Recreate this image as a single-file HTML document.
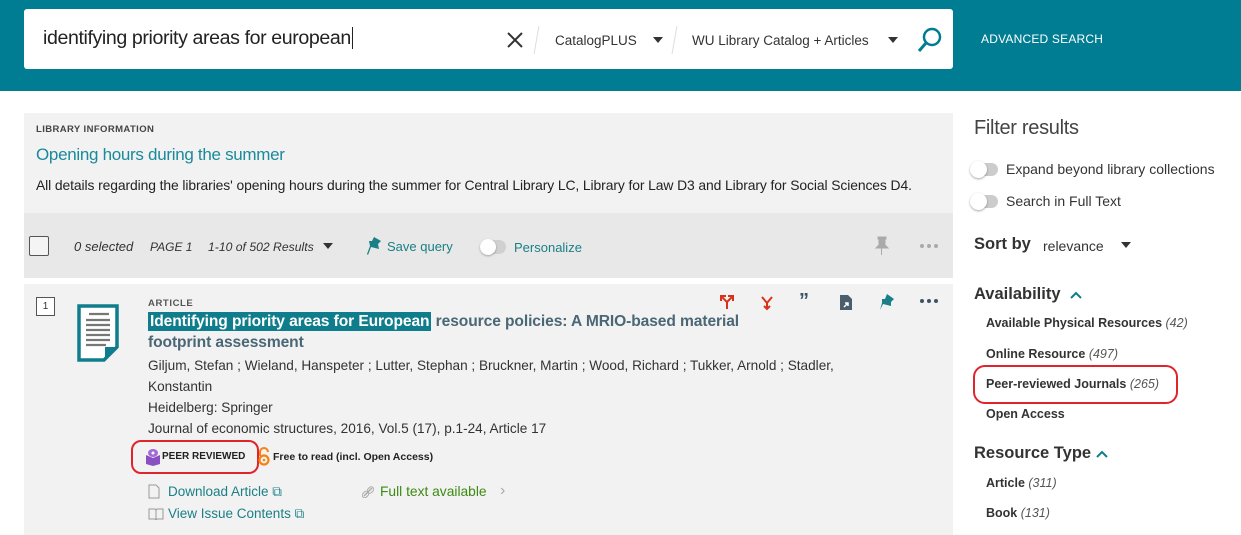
<!DOCTYPE html>
<html><head><style>
*{margin:0;padding:0;box-sizing:border-box}
body{width:1241px;height:535px;overflow:hidden;background:#fff;font-family:"Liberation Sans",sans-serif;color:#333;position:relative}
.a{position:absolute;white-space:nowrap}
.hdr{position:absolute;left:0;top:0;width:1241px;height:91px;background:#007d92}
.sb{position:absolute;left:24px;top:9px;width:929px;height:60px;background:#fff;border-radius:3px}
.f{font-size:12.5px;font-weight:bold;color:#333}
.f i{font-weight:normal;color:#555}
.dots{display:flex;gap:3px}
.dots b{width:4px;height:4px;border-radius:2px;display:block}
</style></head><body>
<div class="hdr"></div>
<div class="sb"></div>
<div class="a" style="left:43px;top:27px;font-size:19.6px;color:#222;letter-spacing:-0.4px">identifying priority areas for european<span style="border-left:1.5px solid #222;margin-left:1px"></span></div>
<svg class="a" style="left:506px;top:31px" width="18" height="18"><path d="M2 2L16 16M16 2L2 16" stroke="#333" stroke-width="2"/></svg>
<div class="a" style="left:536px;top:26px;width:1px;height:28px;background:#ddd;transform:skewX(-10deg)"></div>
<div class="a" style="left:555px;top:33px;font-size:13.5px;color:#333">CatalogPLUS</div>
<div class="a" style="left:653px;top:37px;border:5px solid transparent;border-top:6px solid #333"></div>
<div class="a" style="left:674px;top:26px;width:1px;height:28px;background:#ddd;transform:skewX(-10deg)"></div>
<div class="a" style="left:692px;top:33px;font-size:13.5px;color:#333">WU Library Catalog + Articles</div>
<div class="a" style="left:888px;top:37px;border:5px solid transparent;border-top:6px solid #333"></div>
<svg class="a" style="left:916px;top:26px" width="28" height="28"><circle cx="16" cy="11" r="8" fill="none" stroke="#007d92" stroke-width="2.5"/><path d="M10 17L3 25" stroke="#007d92" stroke-width="3"/></svg>
<div class="a" style="left:981px;top:32px;font-size:12px;color:#fff;letter-spacing:0.2px">ADVANCED SEARCH</div>

<div class="a" style="left:24px;top:113px;width:929px;height:100px;background:#f2f2f2"></div>
<div class="a" style="left:36px;top:124px;font-size:9.5px;font-weight:bold;color:#444;letter-spacing:0.4px">LIBRARY INFORMATION</div>
<div class="a" style="left:36px;top:145px;font-size:17px;color:#1a8a9a;letter-spacing:-0.3px">Opening hours during the summer</div>
<div class="a" style="left:36px;top:177px;font-size:13.9px;color:#222;letter-spacing:-0.1px">All details regarding the libraries' opening hours during the summer for Central Library LC, Library for Law D3 and Library for Social Sciences D4.</div>

<div class="a" style="left:24px;top:213px;width:929px;height:65px;background:#e8e8e8"></div>
<div class="a" style="left:29px;top:236px;width:20px;height:20px;border:1.5px solid #555;border-radius:2px;background:#f4f4f4"></div>
<div class="a" style="left:74px;top:239px;font-size:13px;font-style:italic;color:#333">0 selected</div>
<div class="a" style="left:150px;top:240px;font-size:12px;font-style:italic;color:#333">PAGE 1</div>
<div class="a" style="left:208px;top:240px;font-size:12.2px;font-style:italic;color:#333">1-10 of 502 Results</div>
<div class="a" style="left:323px;top:243px;border:5px solid transparent;border-top:6px solid #333"></div>
<svg class="a" style="left:366px;top:235px" width="18" height="22"><path d="M8 2L15 6L12 9L13 14L5 12L2 20L1 19L4 11L3 6L6 6Z" fill="#1a7f86"/></svg>
<div class="a" style="left:387px;top:239px;font-size:13px;color:#1a7f86">Save query</div>
<div class="a" style="left:480px;top:240px;width:26px;height:14px;border-radius:7px;background:#d0d0d0"></div>
<div class="a" style="left:480px;top:239px;width:16px;height:16px;border-radius:8px;background:#fff;box-shadow:0 1px 2px rgba(0,0,0,.3)"></div>
<div class="a" style="left:514px;top:240px;font-size:13px;color:#1a7f86">Personalize</div>
<svg class="a" style="left:874px;top:236px" width="16" height="20"><path d="M4 1H12V3H11V9L14 12H2L5 9V3H4Z M7.5 12V19" fill="#aaa" stroke="#aaa" stroke-width="1"/></svg>
<div class="a dots" style="left:920px;top:244px"><b style="background:#aaa"></b><b style="background:#aaa"></b><b style="background:#aaa"></b></div>

<div class="a" style="left:24px;top:284px;width:929px;height:251px;background:#f2f2f2"></div>
<div class="a" style="left:36px;top:297px;width:19px;height:19px;border:1px solid #555;font-size:10px;text-align:center;line-height:17px;background:#fff">1</div>
<svg class="a" style="left:77px;top:304px" width="44" height="58"><path d="M2 2H40V43L27 56H2Z" fill="#fff" stroke="#0f7d8c" stroke-width="3.5"/><path d="M28 55V43H40" fill="#0f7d8c"/><g stroke="#777" stroke-width="2.2"><path d="M12 10H32M9 16H33M9 21H33M9 26H33M9 31H33M9 36H33M9 41H29"/></g></svg>
<div class="a" style="left:148px;top:298px;font-size:9.5px;font-weight:bold;color:#555;letter-spacing:0.6px">ARTICLE</div>
<div class="a" style="left:148px;top:311px;font-size:15.6px;font-weight:bold;color:#4a6775;line-height:21px;letter-spacing:-0.1px"><span style="background:#0f7d8c;color:#fff;padding:1px 2px">Identifying priority areas for European</span> resource policies: A MRIO-based material<br>footprint assessment</div>
<div class="a" style="left:148px;top:355px;font-size:13.6px;color:#333;line-height:21px">Giljum, Stefan ; Wieland, Hanspeter ; Lutter, Stephan ; Bruckner, Martin ; Wood, Richard ; Tukker, Arnold ; Stadler,<br>Konstantin<br>Heidelberg: Springer<br>Journal of economic structures, 2016, Vol.5 (17), p.1-24, Article 17</div>
<svg class="a" style="left:145px;top:447px" width="16" height="19"><path d="M1 8L8 11L15 8V17L8 19L1 17Z" fill="#8b4fc4"/><ellipse cx="8" cy="6" rx="5" ry="4" fill="#a36ad8"/><circle cx="8" cy="6" r="1.5" fill="#fff"/></svg>
<div class="a" style="left:162px;top:451px;font-size:10px;font-weight:bold;color:#222">PEER REVIEWED</div>
<div class="a" style="left:131px;top:440px;width:128px;height:34px;border:2px solid #e0242c;border-radius:10px"></div>
<svg class="a" style="left:258px;top:447px" width="12" height="20"><path d="M2 9V5A4 4 0 0 1 10 5" fill="none" stroke="#f68212" stroke-width="2"/><circle cx="6" cy="13" r="4.5" fill="none" stroke="#f68212" stroke-width="2.2"/><circle cx="6" cy="13" r="1.3" fill="#f68212"/></svg>
<div class="a" style="left:273px;top:451px;font-size:10.5px;font-weight:bold;color:#222">Free to read (incl. Open Access)</div>
<svg class="a" style="left:148px;top:484px" width="12" height="15"><path d="M1 1H8L11 4V14H1Z" fill="none" stroke="#999"/></svg>
<div class="a" style="left:168px;top:484px;font-size:13.5px;color:#1a7f86">Download Article ⧉</div>
<svg class="a" style="left:148px;top:507px" width="16" height="13"><path d="M1 2H7L8 3L9 2H15V12H9L8 13L7 12H1Z M8 3V12" fill="none" stroke="#999"/></svg>
<div class="a" style="left:168px;top:506px;font-size:13.5px;color:#1a7f86">View Issue Contents ⧉</div>
<svg class="a" style="left:362px;top:486px" width="12" height="12"><path d="M2 10L10 2" stroke="#aaa" stroke-width="1.5"/><rect x="6" y="0.5" width="5" height="7" rx="2.5" transform="rotate(45 8.5 4)" fill="none" stroke="#aaa"/><rect x="1" y="5" width="5" height="7" rx="2.5" transform="rotate(45 3.5 8.5)" fill="none" stroke="#aaa"/></svg>
<div class="a" style="left:380px;top:484px;font-size:13.8px;color:#3d8a12">Full text available</div>
<div class="a" style="left:500px;top:482px;font-size:16px;color:#aaa">›</div>

<svg class="a" style="left:719px;top:294px" width="16" height="16"><path d="M8 15V8L3 3M8 8L13 3M2 7V2H7M14 7V2H9" fill="none" stroke="#d9321c" stroke-width="2"/></svg>
<svg class="a" style="left:760px;top:295px" width="14" height="16"><path d="M2 2L7 8L12 2M7 8V14M4 11L7 14L10 11" fill="none" stroke="#d9321c" stroke-width="2"/></svg>
<div class="a" style="left:799px;top:290px;font-size:20px;font-weight:bold;color:#3d5466">”</div>
<svg class="a" style="left:839px;top:294px" width="14" height="17"><path d="M1 1H9L13 5V16H1Z" fill="#4a5e6e"/><path d="M5 13L9 9M6 9H9V12" stroke="#fff" stroke-width="1.5" fill="none"/></svg>
<svg class="a" style="left:879px;top:293px" width="16" height="18"><path d="M8 1L15 6L12 9L12 13L4 11L1 17L3 10L3 6L6 6Z" fill="#1a7f86"/></svg>
<div class="a dots" style="left:920px;top:299px"><b style="background:#3d5466"></b><b style="background:#3d5466"></b><b style="background:#3d5466"></b></div>

<div class="a" style="left:974px;top:117px;font-size:20px;color:#444;letter-spacing:-0.3px">Filter results</div>
<div class="a" style="left:972px;top:163px;width:26px;height:13px;border-radius:7px;background:#ccc"></div>
<div class="a" style="left:970px;top:161px;width:17px;height:17px;border-radius:9px;background:#fff;box-shadow:0 1px 2px rgba(0,0,0,.35)"></div>
<div class="a" style="left:1006px;top:161px;font-size:14px;color:#333">Expand beyond library collections</div>
<div class="a" style="left:972px;top:195px;width:26px;height:13px;border-radius:7px;background:#ccc"></div>
<div class="a" style="left:970px;top:193px;width:17px;height:17px;border-radius:9px;background:#fff;box-shadow:0 1px 2px rgba(0,0,0,.35)"></div>
<div class="a" style="left:1006px;top:193px;font-size:14px;color:#333">Search in Full Text</div>
<div class="a" style="left:974px;top:235px;font-size:16.5px;font-weight:bold;color:#333">Sort by</div>
<div class="a" style="left:1043px;top:238px;font-size:14px;color:#333">relevance</div>
<div class="a" style="left:1121px;top:242px;border:5px solid transparent;border-top:6px solid #333"></div>
<div class="a" style="left:974px;top:285px;font-size:16.5px;font-weight:bold;color:#333">Availability</div>
<svg class="a" style="left:1069px;top:290px" width="14" height="10"><path d="M2 8L7 3L12 8" fill="none" stroke="#0f7d8c" stroke-width="2"/></svg>
<div class="a f" style="left:986px;top:316px">Available Physical Resources <i>(42)</i></div>
<div class="a f" style="left:986px;top:347px">Online Resource <i>(497)</i></div>
<div class="a f" style="left:986px;top:377px">Peer-reviewed Journals <i>(265)</i></div>
<div class="a" style="left:973px;top:365px;width:205px;height:39px;border:2px solid #e0242c;border-radius:12px"></div>
<div class="a f" style="left:986px;top:407px">Open Access</div>
<div class="a" style="left:974px;top:444px;font-size:16.5px;font-weight:bold;color:#333">Resource Type</div>
<svg class="a" style="left:1095px;top:449px" width="14" height="10"><path d="M2 8L7 3L12 8" fill="none" stroke="#0f7d8c" stroke-width="2"/></svg>
<div class="a f" style="left:986px;top:476px">Article <i>(311)</i></div>
<div class="a f" style="left:986px;top:506px">Book <i>(131)</i></div>
</body></html>
